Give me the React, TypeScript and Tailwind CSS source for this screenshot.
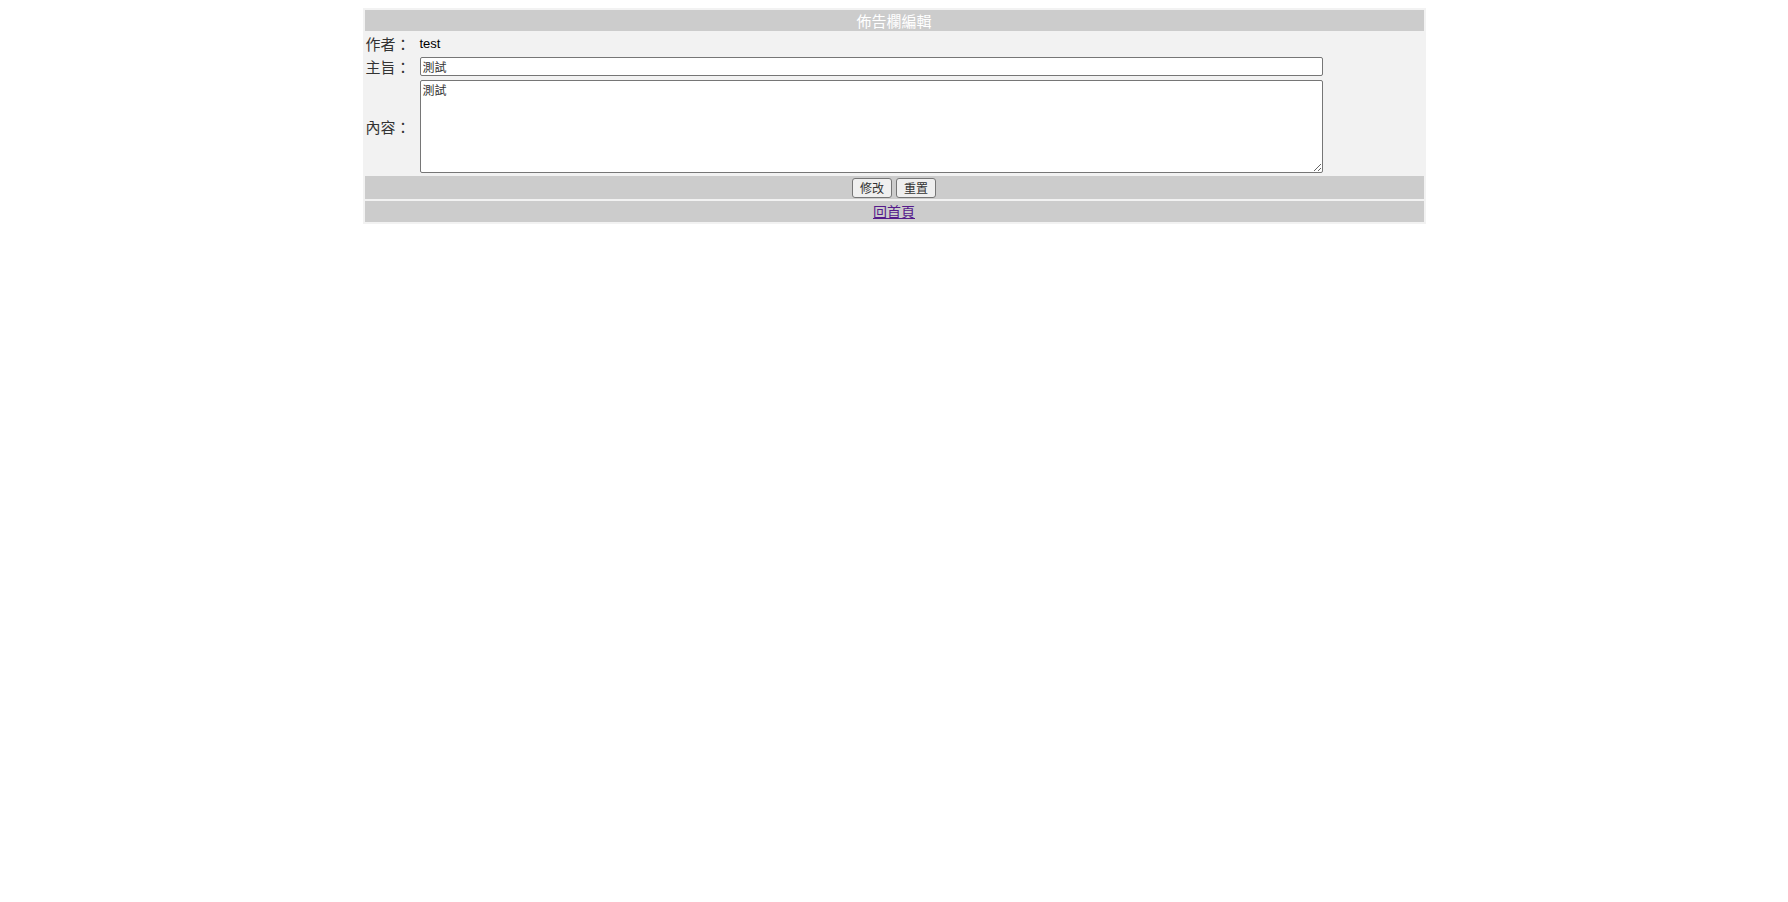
export default function App() {
  return (
    <div className="min-h-screen bg-white pt-2 font-['Noto_Sans_CJK_TC',sans-serif] text-[#222222]">
      <table className="mx-auto w-[1063px] table-fixed border-separate border-spacing-[2px] bg-[#f2f2f2] text-[15px] leading-[19px]">
        <colgroup>
          <col className="w-[52px]" />
          <col />
        </colgroup>
        <tbody>
          <tr>
            <td
              colSpan={2}
              className="h-[21px] bg-[#cccccc] p-px text-center align-middle text-[15px] leading-[19px] text-white"
            >
              佈告欄編輯
            </td>
          </tr>
          <tr>
            <td className="h-[21px] p-px align-middle text-[15px] leading-[19px] text-[#333333]">作者：</td>
            <td className="p-px align-middle font-['Liberation_Sans',sans-serif] text-[13px] leading-[19px] text-black">
              test
            </td>
          </tr>
          <tr>
            <td className="h-[21px] p-px align-middle text-[15px] leading-[19px] text-[#333333]">主旨：</td>
            <td className="p-px align-middle leading-[19px]">
              <input
                type="text"
                defaultValue="測試"
                className="block h-[19px] w-[903px] rounded-[2px] border border-[#767676] bg-white px-[2px] text-[12px] leading-[15px] text-[#333333] outline-none"
              />
            </td>
          </tr>
          <tr>
            <td className="h-[95px] p-px align-middle text-[15px] leading-[19px] text-[#333333]">內容：</td>
            <td className="p-px align-middle leading-[19px]">
              <textarea
                defaultValue="測試"
                className="block h-[93px] w-[903px] rounded-[2px] border border-[#767676] bg-white px-[2px] py-px text-[12px] leading-[16px] text-[#333333] outline-none"
              />
            </td>
          </tr>
          <tr>
            <td colSpan={2} className="h-[23px] bg-[#cccccc] p-px text-center align-middle leading-[19px]">
              <div className="flex items-center justify-center gap-[4px]">
                <button
                  type="submit"
                  className="h-[20px] rounded-[3px] border border-[#767676] bg-[#efefef] px-[7px] text-[12px] leading-[16px] text-[#333333]"
                >
                  修改
                </button>
                <button
                  type="reset"
                  className="h-[20px] rounded-[3px] border border-[#767676] bg-[#efefef] px-[7px] text-[12px] leading-[16px] text-[#333333]"
                >
                  重置
                </button>
              </div>
            </td>
          </tr>
          <tr>
            <td colSpan={2} className="h-[21px] bg-[#cccccc] p-px text-center align-middle text-[14px] leading-[19px]">
              <a href="#" className="text-[14px] leading-[19px] text-[#551a8b] underline">
                回首頁
              </a>
            </td>
          </tr>
        </tbody>
      </table>
    </div>
  );
}
